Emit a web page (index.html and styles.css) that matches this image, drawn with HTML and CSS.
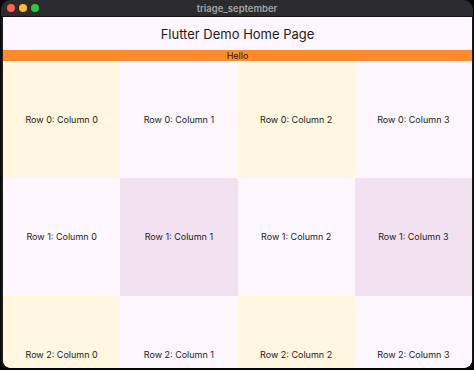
FILE: index.html
```html
<!DOCTYPE html>
<html>
<head>
  <link rel="stylesheet" href="styles.css">
</head>
<body>
  <div class="window">
    <div class="titlebar">
      <div class="lights">
        <span class="light red"></span>
        <span class="light yellow"></span>
        <span class="light green"></span>
      </div>
      <div class="window-title">triage_september</div>
    </div>
    <div class="content">
      <div class="app-bar">Flutter Demo Home Page</div>
      <div class="banner">Hello</div>
      <div class="grid">
        <div class="cell amber">Row 0: Column 0</div>
        <div class="cell">Row 0: Column 1</div>
        <div class="cell amber">Row 0: Column 2</div>
        <div class="cell">Row 0: Column 3</div>
        <div class="cell">Row 1: Column 0</div>
        <div class="cell purple">Row 1: Column 1</div>
        <div class="cell">Row 1: Column 2</div>
        <div class="cell purple">Row 1: Column 3</div>
        <div class="cell amber">Row 2: Column 0</div>
        <div class="cell">Row 2: Column 1</div>
        <div class="cell amber">Row 2: Column 2</div>
        <div class="cell">Row 2: Column 3</div>
      </div>
    </div>
  </div>
</body>
</html>
```

FILE: styles.css
```css
html, body { margin: 0; height: 100%; }
body {
  background: #050608;
  font-family: Inter, "Noto Sans", sans-serif;
  overflow: hidden;
}
.window {
  height: 368px;
  margin: 0 1px;
  background: #1b1b1d;
  border-radius: 10px 10px 9px 9px;
  overflow: hidden;
  display: flex;
  flex-direction: column;
}
.titlebar {
  height: 17px;
  flex-shrink: 0;
  background: #2c2c2e;
  border-bottom: 1px solid #111;
  box-sizing: border-box;
  display: flex;
  align-items: center;
  position: relative;
}
.lights { display: flex; gap: 4px; padding-left: 6px; }
.light { width: 8px; height: 8px; border-radius: 50%; }
.red { background: #fe5f57; }
.yellow { background: #febc2e; }
.green { background: #28c840; }
.window-title {
  position: absolute;
  left: 0;
  right: 0;
  text-align: center;
  color: #a3a3a5;
  font-size: 9.5px;
  font-weight: 600;
}
.content {
  flex: 1;
  margin: 0 1px 0 2px;
  background: #fef7ff;
  overflow: hidden;
  border-radius: 0 0 8px 8px;
}
.app-bar {
  height: 33px;
  display: flex;
  align-items: center;
  justify-content: center;
  font-size: 13px;
  color: #1d1b20;
}
.banner {
  height: 11px;
  line-height: 11px;
  background: #fe8b2a;
  text-align: center;
  font-size: 9px;
  color: #2b1a0c;
}
.grid {
  display: grid;
  grid-template-columns: repeat(4, 1fr);
  grid-auto-rows: 117.3px;
}
.cell {
  display: flex;
  align-items: center;
  justify-content: center;
  font-size: 9px;
  color: #1d1b20;
  background: #fef7ff;
}
.amber { background: #fff7e0; }
.purple { background: #f2e2f1; }
```
